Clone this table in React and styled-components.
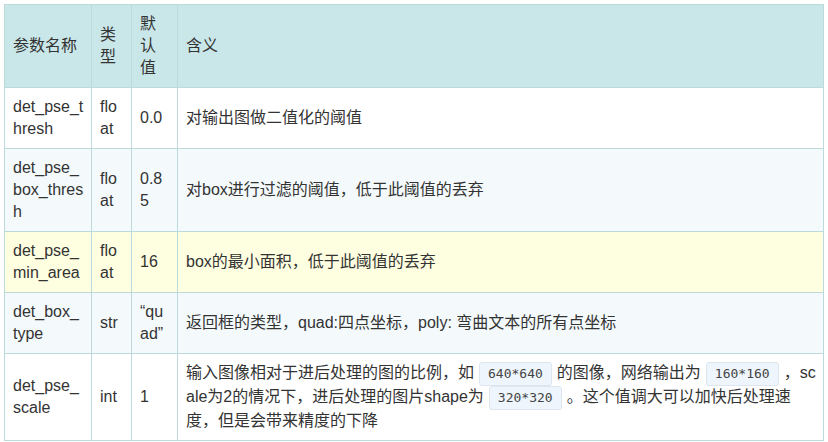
import styled, { createGlobalStyle } from "styled-components";

const GlobalStyle = createGlobalStyle`
  body {
    margin: 0;
    background: #ffffff;
  }
`;

const Page = styled.div`
  padding: 4px;
  font-family: "Liberation Sans", "Noto Sans CJK SC", sans-serif;
  font-size: 16px;
  color: #333333;
`;

const Table = styled.table`
  width: 820px;
  border-collapse: collapse;
  table-layout: fixed;
`;

const HeadCell = styled.th`
  background: #c9e6e8;
  border: 1px solid #bcdadb;
  padding: 8px;
  line-height: 22px;
  font-weight: normal;
  text-align: left;
  vertical-align: middle;
  white-space: nowrap;
`;

const Row = styled.tr`
  background: ${(p) =>
    p.$tone === "yellow" ? "#fefee0" : p.$tone === "light" ? "#f4fafc" : "#ffffff"};
`;

const Cell = styled.td`
  border: 1px solid #bcdadb;
  padding: 8px;
  line-height: 22px;
  vertical-align: middle;
  white-space: nowrap;
`;

const Code = styled.code`
  display: inline-block;
  font-family: "DejaVu Sans Mono", "Liberation Mono", monospace;
  font-size: 13px;
  line-height: 22px;
  color: #444;
  background: #eef5fc;
  border: 1px solid #dde6ee;
  border-radius: 3px;
  padding: 0 8px;
  margin: 0 5px;
  vertical-align: middle;
`;

const Lines = ({ parts }) =>
  parts.map((t, i) => (
    <span key={i}>
      {i > 0 && <br />}
      {t}
    </span>
  ));

const rows = [
  { name: ["det_pse_t", "hresh"], type: ["flo", "at"], def: ["0.0"], desc: "对输出图做二值化的阈值", tone: "white" },
  { name: ["det_pse_", "box_thres", "h"], type: ["flo", "at"], def: ["0.8", "5"], desc: "对box进行过滤的阈值，低于此阈值的丢弃", tone: "light" },
  { name: ["det_pse_", "min_area"], type: ["flo", "at"], def: ["16"], desc: "box的最小面积，低于此阈值的丢弃", tone: "yellow" },
  { name: ["det_box_", "type"], type: ["str"], def: ["“qu", "ad”"], desc: "返回框的类型，quad:四点坐标，poly: 弯曲文本的所有点坐标", tone: "light" },
];

function App() {
  return (
    <Page>
      <GlobalStyle />
      <Table>
        <colgroup>
          <col style={{ width: 87 }} />
          <col style={{ width: 40 }} />
          <col style={{ width: 46 }} />
          <col />
        </colgroup>
        <thead>
          <tr>
            <HeadCell>参数名称</HeadCell>
            <HeadCell>
              <Lines parts={["类", "型"]} />
            </HeadCell>
            <HeadCell>
              <Lines parts={["默", "认", "值"]} />
            </HeadCell>
            <HeadCell>含义</HeadCell>
          </tr>
        </thead>
        <tbody>
          {rows.map((r) => (
            <Row key={r.name.join("")} $tone={r.tone}>
              <Cell>
                <Lines parts={r.name} />
              </Cell>
              <Cell>
                <Lines parts={r.type} />
              </Cell>
              <Cell>
                <Lines parts={r.def} />
              </Cell>
              <Cell>{r.desc}</Cell>
            </Row>
          ))}
          <Row $tone="white">
            <Cell>
              <Lines parts={["det_pse_", "scale"]} />
            </Cell>
            <Cell>int</Cell>
            <Cell>1</Cell>
            <Cell>
              输入图像相对于进后处理的图的比例，如<Code>640*640</Code>的图像，网络输出为<Code>160*160</Code>，sc
              <br />
              ale为2的情况下，进后处理的图片shape为<Code>320*320</Code>。这个值调大可以加快后处理速
              <br />
              度，但是会带来精度的下降
            </Cell>
          </Row>
        </tbody>
      </Table>
    </Page>
  );
}

export default App;
